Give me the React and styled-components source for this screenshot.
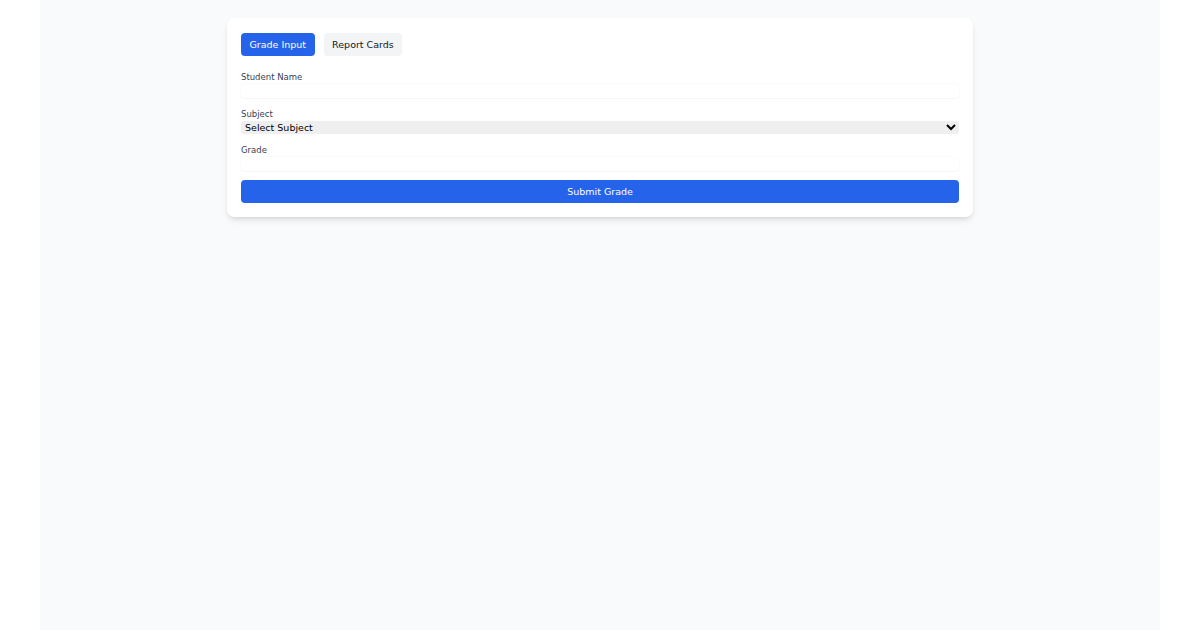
import React, { useState } from 'react'
import styled, { createGlobalStyle } from 'styled-components'

const GlobalStyle = createGlobalStyle`
    html, body {
        margin: 0;
        padding: 0;
        background: #ffffff;
        font-family: "DejaVu Sans", "Noto Sans", sans-serif;
    }
    * {
        box-sizing: border-box;
    }
`

const Page = styled.div`
    width: 1120px;
    min-height: 630px;
    margin: 0 auto;
    background: #f9fafb;
    padding-top: 18px;
    display: flex;
    justify-content: center;
    align-items: flex-start;
`

const Card = styled.div`
    width: 746px;
    background: #ffffff;
    border-radius: 7px;
    box-shadow: 0 4px 6px -1px rgba(0, 0, 0, 0.1), 0 2px 4px -2px rgba(0, 0, 0, 0.1);
    padding: 15px 14px 14px;
    display: flex;
    flex-direction: column;
`

const Tabs = styled.div`
    display: flex;
    gap: 9px;
    margin-bottom: 16px;
`

const Tab = styled.button`
    height: 23px;
    padding: 0 8.5px;
    border: none;
    border-radius: 4px;
    font-family: inherit;
    font-size: 9.5px;
    cursor: pointer;
    background: ${p => p.active ? '#2563eb' : '#f3f4f6'};
    color: ${p => p.active ? '#ffffff' : '#111827'};
`

const Field = styled.div`
    display: flex;
    flex-direction: column;
    margin-bottom: ${p => p.gap || 11}px;
`

const Label = styled.label`
    font-size: 8.5px;
    line-height: 11px;
    color: #374151;
    margin-bottom: 1px;
`

const Input = styled.input`
    height: 14px;
    border: none;
    border-radius: 3px;
    box-shadow: 0 0 0 0.5px rgba(0, 0, 0, 0.035), 0 1px 1px rgba(0, 0, 0, 0.025);
    background: #ffffff;
    outline: none;
`

const Select = styled.select`
    height: 13px;
    border: none;
    border-radius: 3px;
    background: #efefef;
    font-family: "DejaVu Sans", sans-serif;
    font-size: 9.5px;
    font-weight: 400;
    color: #000000;
    padding: 0;
`

const Submit = styled.button`
    height: 23px;
    border: none;
    border-radius: 4px;
    background: #2563eb;
    color: #ffffff;
    font-family: inherit;
    font-size: 9.5px;
    cursor: pointer;
`

const App = () => {
    const [tab, setTab] = useState('input')

    return (
        <>
            <GlobalStyle />
            <Page>
                <Card>
                    <Tabs>
                        <Tab active={tab === 'input'} onClick={() => setTab('input')}>Grade Input</Tab>
                        <Tab active={tab === 'cards'} onClick={() => setTab('cards')}>Report Cards</Tab>
                    </Tabs>
                    <Field>
                        <Label>Student Name</Label>
                        <Input type="text" />
                    </Field>
                    <Field>
                        <Label>Subject</Label>
                        <Select defaultValue="">
                            <option value="">Select Subject</option>
                            <option value="math">Mathematics</option>
                            <option value="science">Science</option>
                            <option value="english">English</option>
                        </Select>
                    </Field>
                    <Field gap={9}>
                        <Label>Grade</Label>
                        <Input type="number" />
                    </Field>
                    <Submit>Submit Grade</Submit>
                </Card>
            </Page>
        </>
    )
}

export default App
